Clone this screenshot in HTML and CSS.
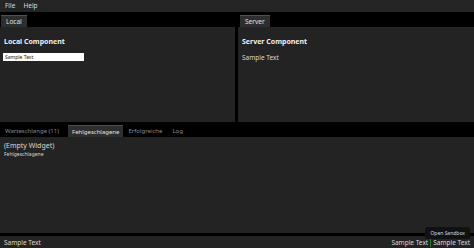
FILE: index.html
```html
<!DOCTYPE html>
<html lang="de">
<head>
  <meta charset="UTF-8" />
  <title>Sandbox</title>
  <link rel="stylesheet" href="styles.css">
</head>
<body>
  <div class="menubar">
    <span>File</span>
    <span>Help</span>
  </div>

  <div class="top">
    <div class="pane">
      <div class="tabstrip"><div class="tab active">Local</div></div>
      <div class="pane-body">
        <h2>Local Component</h2>
        <input type="text" value="Sample Text" />
      </div>
    </div>
    <div class="pane">
      <div class="tabstrip"><div class="tab active">Server</div></div>
      <div class="pane-body">
        <h2>Server Component</h2>
        <p>Sample Text</p>
      </div>
    </div>
  </div>

  <div class="bottom">
    <div class="tabstrip wide">
      <div class="tab">Warteschlange (11)</div>
      <div class="tab active">Fehlgeschlagene</div>
      <div class="tab">Erfolgreiche</div>
      <div class="tab">Log</div>
    </div>
    <div class="bottom-body">
      <div class="empty">(Empty Widget)</div>
      <div class="small">Fehlgeschlagene</div>
    </div>
  </div>

  <div class="statusbar">
    <span>Sample Text</span>
    <div class="status-right">
      <span>Sample Text</span>
      <span class="sep"></span>
      <span>Sample Text</span>
    </div>
    <div class="tooltip">Open Sandbox</div>
  </div>
</body>
</html>
```

FILE: styles.css
```css
body {
  margin: 0;
  height: 248px;
  display: flex;
  flex-direction: column;
  background: #000;
  color: #d8d8d8;
  font-family: "Noto Sans", sans-serif;
  font-size: 6.5px;
  overflow: hidden;
}
.menubar {
  height: 12px;
  background: #252525;
  display: flex;
  gap: 8px;
  padding-left: 5px;
  align-items: center;
  line-height: 12px;
}
.top {
  display: flex;
  gap: 3px;
  height: 110px;
}
.pane {
  flex: 1;
  display: flex;
  flex-direction: column;
}
.pane:first-child {
  flex: 0 0 235px;
}
.tabstrip {
  height: 15px;
  background: #000;
  display: flex;
  align-items: flex-end;
  padding-left: 1px;
}
.pane:last-child .tabstrip {
  padding-left: 2px;
}
.tab {
  height: 12px;
  line-height: 12px;
  padding: 0 5px;
  color: #8a8a8a;
  font-size: 6.5px;
}
.tab.active {
  background: #2e2e2e;
  color: #e0e0e0;
  border-top: 1px solid #505050;
  height: 11px;
}
.pane-body {
  flex: 1;
  background: #232323;
  padding: 0 4px;
}
h2 {
  margin: 10px 0 7px;
  font-size: 7px;
  font-weight: bold;
  color: #f0f0f0;
}
input {
  width: 81px;
  height: 8px;
  box-sizing: border-box;
  border: none;
  padding: 0 2px;
  margin: 0 -1px;
  font-family: "Noto Sans", sans-serif;
  font-size: 5px;
  color: #222;
  display: block;
}
p {
  margin: 0;
  font-size: 6.5px;
}
.bottom {
  flex: 1;
  display: flex;
  flex-direction: column;
}
.tabstrip.wide {
  padding-left: 0;
}
.tabstrip.wide .tab {
  font-size: 6px;
}
.tabstrip.wide .tab.active {
  margin-left: 4px;
  padding: 0 4px;
}
.bottom-body {
  flex: 1;
  background: #232323;
  padding: 4px 4px;
  margin-bottom: 3px;
}
.empty {
  font-size: 7px;
  line-height: 10px;
}
.small {
  font-size: 5px;
  line-height: 7px;
}
.statusbar {
  height: 12px;
  background: #232323;
  display: flex;
  align-items: center;
  justify-content: space-between;
  padding: 0 4px;
  font-size: 6.5px;
  position: relative;
}
.status-right {
  display: flex;
  align-items: center;
  gap: 2px;
}
.sep {
  width: 1px;
  height: 10px;
  background: #2a7a2a;
}
.tooltip {
  position: absolute;
  right: 4px;
  top: -9px;
  background: #111;
  color: #d8d8d8;
  font-size: 5px;
  padding: 3px 5px;
  border-radius: 2px;
}
```
